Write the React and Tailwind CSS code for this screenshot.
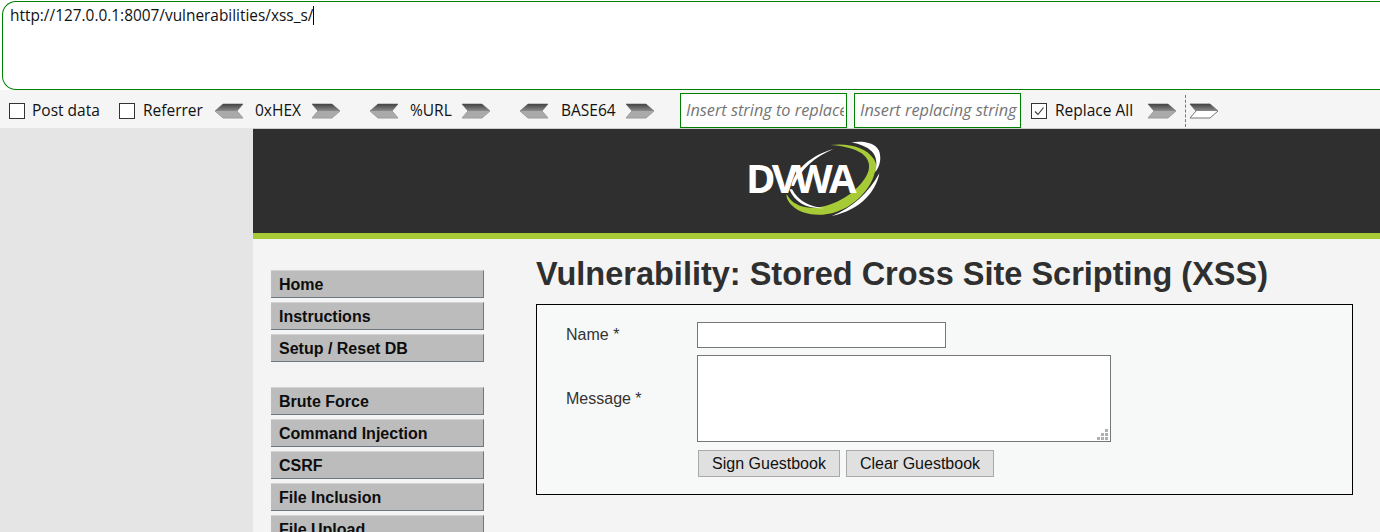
import React from 'react';

const menuGroups = [
  ['Home', 'Instructions', 'Setup / Reset DB'],
  ['Brute Force', 'Command Injection', 'CSRF', 'File Inclusion', 'File Upload'],
];

function Arrow({ dir, hollow }) {
  const points =
    dir === 'left'
      ? '9,1 29,1 23,8 29,15 9,15 1,8'
      : '1,1 21,1 29,8 21,15 1,15 7,8';
  const topHalf = dir === 'left' ? 'M9 1H29L23 8H1Z' : 'M1 1H21L29 8H7Z';
  return (
    <svg width="30" height="16" viewBox="0 0 30 16" className="block shrink-0">
      <defs>
        <linearGradient id="arrowTop" x1="0" y1="0" x2="0" y2="1">
          <stop offset="0" stopColor="#444444" />
          <stop offset="1" stopColor="#8a8a8a" />
        </linearGradient>
      </defs>
      <polygon points={points} fill={hollow ? '#ffffff' : '#aaaaaa'} stroke={hollow ? '#777777' : '#9c9c9c'} strokeWidth="1" />
      <path d={topHalf} fill="url(#arrowTop)" />
    </svg>
  );
}

function Check({ checked }) {
  return (
    <span className="w-4 h-4 border border-[#333333] bg-white shrink-0 flex items-center justify-center">
      {checked && (
        <svg width="12" height="12" viewBox="0 0 12 12" fill="none">
          <path d="M2 6.5L5 9.5L10.5 2.5" stroke="#333333" strokeWidth="1.1" />
        </svg>
      )}
    </span>
  );
}

function Logo() {
  return (
    <div className="relative w-[190px] h-[103px]">
      {/* traced at 3x, hence the viewBox */}
      <svg width="190" height="103" viewBox="0 0 570 309" className="absolute left-0 top-0">
        <path d="M330 45C385 38 440 52 462 88C472 105 470 120 464 128C455 170 410 225 350 245C300 262 250 255 222 232C206 218 198 205 200 192C214 222 250 238 295 232C350 225 405 190 435 145C455 115 450 88 425 70C400 54 365 47 330 45Z" fill="#a6cb37" />
        <path d="M395 37C430 32 465 38 477 62C485 85 480 108 466 126C472 100 470 80 455 64C440 50 420 42 395 37Z" fill="#ffffff" />
        <path d="M478 130C470 180 425 240 335 258C395 235 445 190 478 130Z" fill="#ffffff" />
        <path d="M214 168C222 120 275 75 340 57C285 80 240 120 222 168Z" fill="#ffffff" />
        <path d="M208 178C225 222 270 238 312 234C275 232 235 215 216 178Z" fill="#ffffff" />
      </svg>
      <span className="absolute left-[26px] top-[23px] font-['Open_Sans',sans-serif] font-bold text-[40px] leading-[50px] tracking-[-3.75px] text-white">
        DVWA
      </span>
    </div>
  );
}

export default function App() {
  return (
    <div className="h-[532px] overflow-hidden bg-[#e5e5e5] font-['Liberation_Sans',sans-serif]">
      {/* url box */}
      <div className="h-[90px] bg-white pl-[2px] pt-px">
        <div className="h-[89px] border border-[#008000] border-r-0 rounded-l-[14px] pl-[7px] pt-[3px] font-['Open_Sans',sans-serif] text-[15.4px] leading-[22px] text-[#111111]">
          <span>http://127.0.0.1:8007/vulnerabilities/xss_s/</span>
          <span className="inline-block w-px h-[19px] bg-black align-[-4px]" />
        </div>
      </div>

      {/* hackbar toolbar */}
      <div className="h-[38px] bg-[#f5f5f5] flex items-center pt-[3px] pl-[9px] font-['Open_Sans',sans-serif] text-[15.5px] text-[#111111]">
        <Check />
        <span className="ml-[7px] w-[87px]">Post data</span>
        <Check />
        <span className="ml-[8px] w-[71px]">Referrer</span>
        <Arrow dir="left" />
        <span className="ml-[11px] w-[56px]">0xHEX</span>
        <Arrow dir="right" />
        <div className="w-[28px]" />
        <Arrow dir="left" />
        <span className="ml-[11px] w-[51px]">%URL</span>
        <Arrow dir="right" />
        <div className="w-[28px]" />
        <Arrow dir="left" />
        <span className="ml-[12px] w-[64px]">BASE64</span>
        <Arrow dir="right" />
        <div className="w-[25px]" />
        <div className="w-[167px] h-[35px] border border-[#008000] bg-white pl-[5px] overflow-hidden whitespace-nowrap italic text-[16.3px] leading-[33px] text-[#757575]">
          <div className="w-[158px] overflow-hidden">Insert string to replace</div>
        </div>
        <div className="w-[167px] h-[35px] ml-[7px] border border-[#008000] bg-white pl-[5px] overflow-hidden whitespace-nowrap italic text-[16.3px] leading-[33px] text-[#757575]">
          Insert replacing string
        </div>
        <div className="w-[10px]" />
        <Check checked />
        <span className="ml-[8px] w-[92px]">Replace All</span>
        <Arrow dir="right" />
        <div className="ml-[8px] h-[32px] border-l border-dashed border-[#777777]" />
        <div className="ml-[3px]">
          <Arrow dir="right" hollow />
        </div>
      </div>

      {/* page */}
      <div className="ml-[253px] h-[404px] bg-[#f4f4f4] border-t border-[#cccccc]">
        <div className="h-[104px] bg-[#2f2f2f] flex justify-center pt-px pr-[3px]">
          <Logo />
        </div>
        <div className="h-[6px] bg-[#a6cb37]" />
        <div className="flex pl-[18px] pt-[31px]">
          <div className="w-[213px] shrink-0 flex flex-col gap-[25px]">
            {menuGroups.map((group, i) => (
              <div key={i} className="flex flex-col gap-[4px]">
                {group.map((item) => (
                  <div
                    key={item}
                    className="h-[28px] bg-[#bcbcbc] border-t border-t-[#d2d2d2] border-b border-b-[#6f7585] border-r border-r-[#6f7585] pl-[8px] font-bold text-[16px] leading-[27px] text-[#0d0d0d]"
                  >
                    {item}
                  </div>
                ))}
              </div>
            ))}
          </div>
          <div className="ml-[52px] w-[817px] shrink-0">
            <h1 className="font-bold text-[32.5px] leading-[40px] -mt-[16px] text-[#2f2f2f] whitespace-nowrap">
              Vulnerability: Stored Cross Site Scripting (XSS)
            </h1>
            <div className="mt-[10px] h-[191px] border border-black bg-[#f7f9f9] text-[16px] text-[#333333]">
              <div className="flex h-[43px]">
                <span className="ml-[29px] w-[131px] pt-[21px] leading-[18px]">Name *</span>
                <div className="mt-[17px] w-[249px] h-[26px] border border-[#767676] bg-white" />
              </div>
              <div className="flex mt-[7px] h-[87px]">
                <span className="ml-[29px] w-[131px] self-center leading-[18px]">Message *</span>
                <div className="relative w-[414px] h-[87px] border border-[#767676] bg-white">
                  <svg width="11" height="11" viewBox="0 0 11 11" className="absolute right-[2px] bottom-px">
                    <path d="M8 0h3v3H8zM4 4h3v3H4zM8 4h3v3H8zM0 8h3v3H0zM4 8h3v3H4zM8 8h3v3H8z" fill="#b0b0b0" />
                  </svg>
                </div>
              </div>
              <div className="flex gap-[6px] ml-[161px] mt-[8px] text-[#111111]">
                <div className="w-[142px] h-[27px] bg-[#e0e0e0] border border-[#a9a9a9] text-center leading-[26px]">Sign Guestbook</div>
                <div className="w-[148px] h-[27px] bg-[#e0e0e0] border border-[#a9a9a9] text-center leading-[26px]">Clear Guestbook</div>
              </div>
            </div>
          </div>
        </div>
      </div>
    </div>
  );
}
